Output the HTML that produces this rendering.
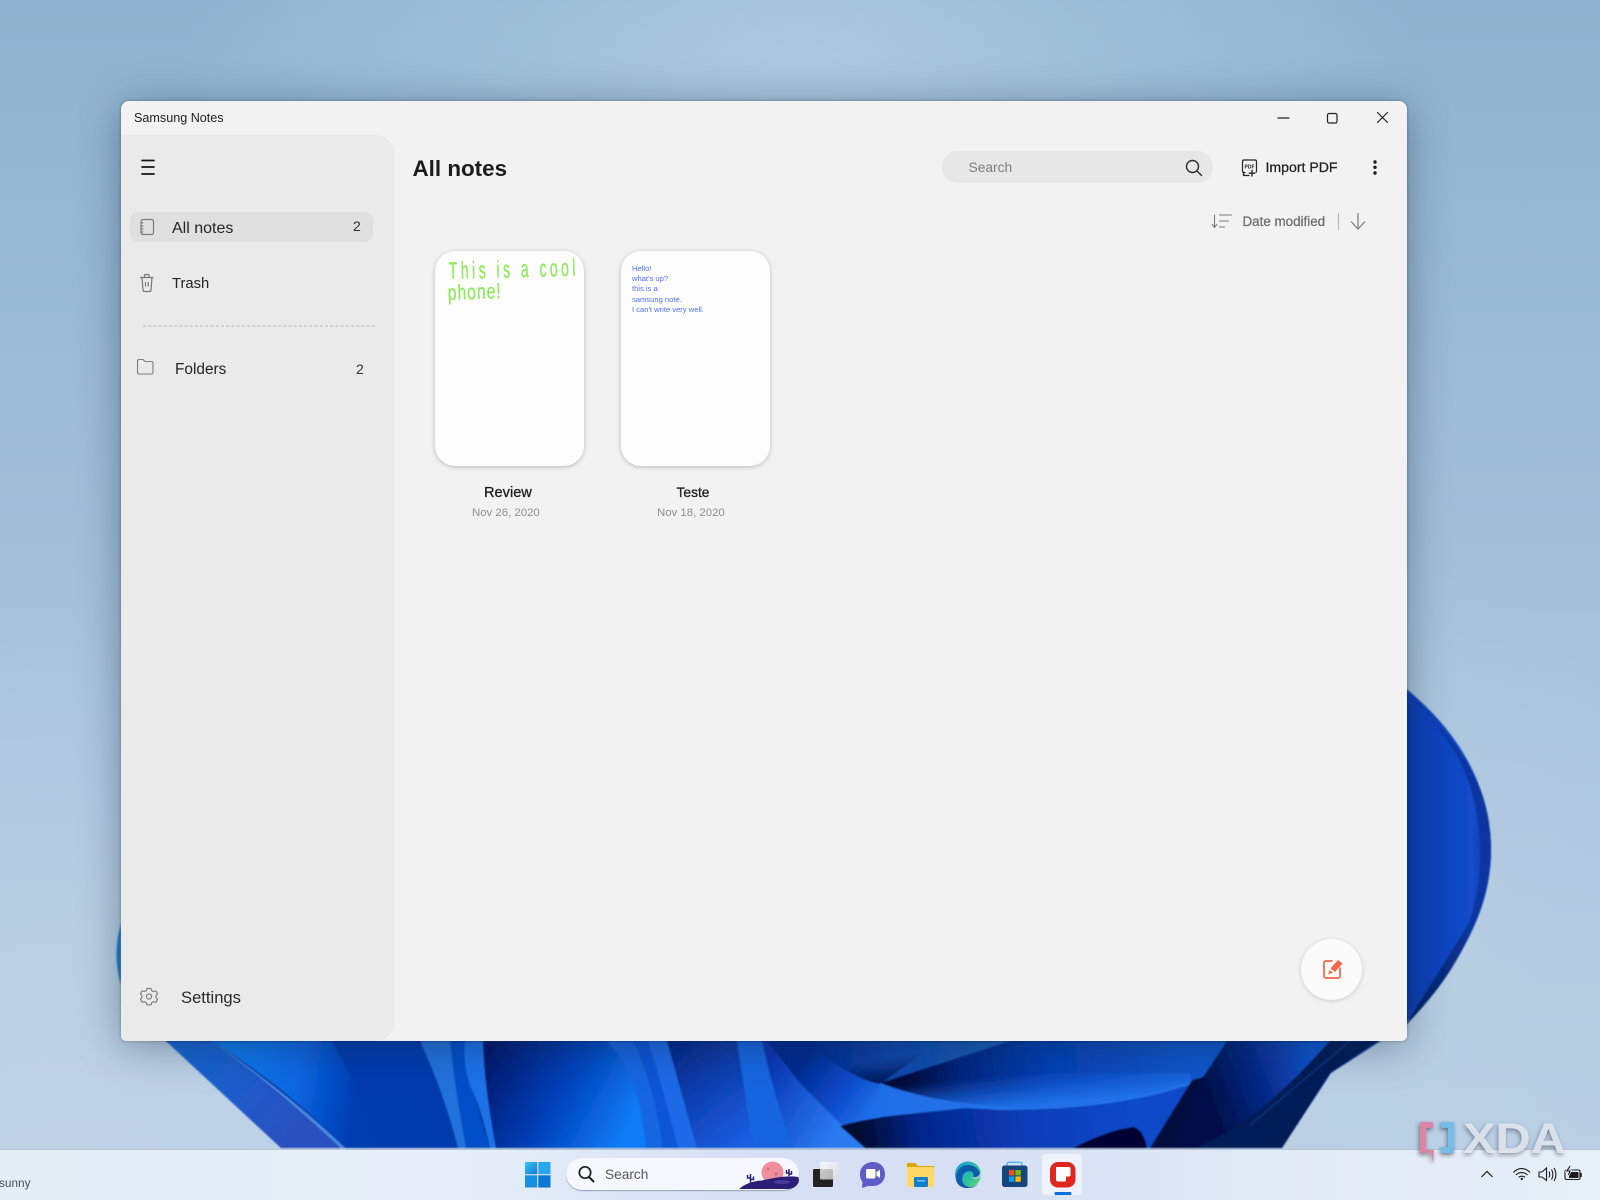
<!DOCTYPE html>
<html lang="en"><head><meta charset="utf-8"><title>Samsung Notes</title>
<style>
html,body{margin:0;padding:0;width:1600px;height:1200px;overflow:hidden}
body{position:relative;font-family:"Liberation Sans",sans-serif;background:#a9c4dc}
svg{position:absolute;overflow:visible}
.t{position:absolute;white-space:nowrap;line-height:20px;height:20px;color:#222;filter:blur(.25px)}
.bg{position:absolute;inset:0;background:
 radial-gradient(ellipse 620px 260px at 800px 60px,#abc9e0 0%,rgba(171,201,224,0) 100%),
 radial-gradient(ellipse 1000px 700px at 1000px 1200px,#bdd2e6 0%,rgba(189,210,230,0) 100%),
 radial-gradient(ellipse 800px 600px at 100px 1200px,#c0d3e6 0%,rgba(192,211,230,0) 100%),
 linear-gradient(180deg,#8fb3d0 0%,#9dbcd7 35%,#a9c4dd 60%,#b9cee3 100%)}
.win{position:absolute;left:121px;top:101px;width:1286px;height:940px;background:#f2f2f2;border-radius:8px 8px 5px 5px;box-shadow:0 6px 42px rgba(20,40,70,.42),0 0 3px rgba(0,0,0,.3)}
.side{position:absolute;left:121px;top:135px;width:273px;height:906px;background:#eaeaea;border-radius:0 18px 18px 5px}
.pill{position:absolute;left:130px;top:212px;width:243px;height:30px;background:#dfdfdf;border-radius:8px}
.search{position:absolute;left:942px;top:151px;width:271px;height:32px;background:#e7e7e7;border-radius:16px}
.card{position:absolute;top:251px;width:148.5px;height:215px;background:#fdfdfd;border-radius:20px;box-shadow:0 1px 5px rgba(0,0,0,.24)}
.fab{position:absolute;left:1301px;top:939px;width:61px;height:61px;border-radius:50%;background:#fbfbfb;box-shadow:0 1px 5px rgba(0,0,0,.16)}
.bar{position:absolute;left:0;top:1149px;width:1600px;height:51px;border-top:1px solid #b9c4d2;box-sizing:border-box;background:linear-gradient(90deg,#e3eef7 0%,#e6eff9 28%,#d6dff3 48%,#d6dff3 60%,#dfe8f6 75%,#e6f0f8 100%)}
.pillsearch{position:absolute;left:566px;top:1158px;width:233px;height:32px;border-radius:16px;background:#f5f8fe;box-shadow:0 1px 1px rgba(80,90,120,.5)}
.active{position:absolute;left:1042px;top:1154px;width:40px;height:41px;border-radius:4px;background:#eef2fb}
.ln{position:absolute;left:632px;font-size:7.6px;line-height:10px;color:#4f70ff;white-space:nowrap}
</style></head><body>
<div class="bg"></div>

<svg width="1600" height="1200" viewBox="0 0 1600 1200" style="left:0;top:0">
<defs>
<linearGradient id="gE" x1="490" y1="1050" x2="630" y2="1125" gradientUnits="userSpaceOnUse"><stop offset="0" stop-color="#00186c"/><stop offset=".5" stop-color="#0340b8"/><stop offset="1" stop-color="#0a7cf6"/></linearGradient>
<linearGradient id="gB" x1="240" y1="1060" x2="360" y2="1080" gradientUnits="userSpaceOnUse"><stop offset="0" stop-color="#0b78ec"/><stop offset=".5" stop-color="#0866e2"/><stop offset="1" stop-color="#023cb0"/></linearGradient>
<linearGradient id="gA" x1="180" y1="1050" x2="290" y2="1140" gradientUnits="userSpaceOnUse"><stop offset="0" stop-color="#1266d4"/><stop offset="1" stop-color="#2a50bf"/></linearGradient>
<linearGradient id="gF" x1="670" y1="1045" x2="750" y2="1145" gradientUnits="userSpaceOnUse"><stop offset="0" stop-color="#03278a"/><stop offset="1" stop-color="#1b60e4"/></linearGradient>
<linearGradient id="gH" x1="770" y1="1060" x2="850" y2="1110" gradientUnits="userSpaceOnUse"><stop offset="0" stop-color="#0736b4"/><stop offset="1" stop-color="#2a7af0"/></linearGradient>
<linearGradient id="gI" x1="810" y1="1050" x2="880" y2="1100" gradientUnits="userSpaceOnUse"><stop offset="0" stop-color="#012a90"/><stop offset=".6" stop-color="#0b4ccc"/><stop offset="1" stop-color="#1f6ee8"/></linearGradient>
<linearGradient id="gJ" x1="807" y1="1041" x2="1010" y2="1041" gradientUnits="userSpaceOnUse"><stop offset="0" stop-color="#02298e"/><stop offset=".45" stop-color="#0b48ac"/><stop offset="1" stop-color="#1c62ba"/></linearGradient>
<linearGradient id="gJd" x1="885" y1="1058" x2="890" y2="1086" gradientUnits="userSpaceOnUse"><stop offset="0" stop-color="#000a40" stop-opacity="0"/><stop offset="1" stop-color="#000a40" stop-opacity=".9"/></linearGradient>
<linearGradient id="gK" x1="905" y1="1075" x2="1190" y2="1055" gradientUnits="userSpaceOnUse"><stop offset="0" stop-color="#000a3a"/><stop offset=".2" stop-color="#02267f"/><stop offset=".5" stop-color="#0440b4"/><stop offset="1" stop-color="#0f56ca"/></linearGradient>
<linearGradient id="gK2" x1="1015" y1="1074" x2="1018" y2="1107" gradientUnits="userSpaceOnUse"><stop offset="0" stop-color="#1b6ce6" stop-opacity="0"/><stop offset="1" stop-color="#2274ec" stop-opacity=".95"/></linearGradient>
<linearGradient id="gL" x1="860" y1="1140" x2="1130" y2="1095" gradientUnits="userSpaceOnUse"><stop offset="0" stop-color="#000a30"/><stop offset=".22" stop-color="#02258a"/><stop offset=".6" stop-color="#0a3cb8"/><stop offset="1" stop-color="#1048c8"/></linearGradient>
<linearGradient id="gM" x1="880" y1="1095" x2="1010" y2="1105" gradientUnits="userSpaceOnUse"><stop offset="0" stop-color="#1f6ee8"/><stop offset="1" stop-color="#2272ea"/></linearGradient>
<linearGradient id="gN" x1="1205" y1="1090" x2="1310" y2="1050" gradientUnits="userSpaceOnUse"><stop offset="0" stop-color="#000f48"/><stop offset=".5" stop-color="#052a8a"/><stop offset="1" stop-color="#1154d0"/></linearGradient>
<linearGradient id="gR" x1="1407" y1="850" x2="1490" y2="850" gradientUnits="userSpaceOnUse"><stop offset="0" stop-color="#0a3bb0"/><stop offset=".8" stop-color="#124ccb"/><stop offset="1" stop-color="#0a3aa8"/></linearGradient>
<linearGradient id="gS" x1="1407" y1="1020" x2="1470" y2="920" gradientUnits="userSpaceOnUse"><stop offset="0" stop-color="#02215f"/><stop offset="1" stop-color="#0a36a0"/></linearGradient>
<filter id="soft"><feGaussianBlur stdDeviation=".7"/></filter>
</defs>
<g filter="url(#soft)">
<path d="M121 923C115 945 115 965 121 985Z" fill="#1a7fd0"/>
<path d="M121 1000L166 1041L281 1148H1282L1331 1073L1379 1042L1410 1018C1455 960 1491 910 1491 850C1491 790 1460 730 1405 690L1200 800L300 900Z" fill="#03369f"/>
<path d="M1400 684C1460 730 1491 790 1491 850C1491 900 1470 945 1437 985L1400 1030Z" fill="url(#gR)"/>
<path d="M1400 1030C1440 985 1482 930 1480 850C1480 790 1455 735 1407 696C1465 745 1491 790 1491 850C1491 905 1460 970 1405 1026Z" fill="#0836a2"/>
<path d="M1405 1026L1480 905C1465 955 1440 990 1405 1026Z" fill="url(#gS)"/>

<path d="M166 1041H214L345 1148H281Z" fill="url(#gA)"/>
<path d="M212 1041H332Q360 1090 381 1148H345Q290 1090 212 1041Z" fill="url(#gB)"/>
<path d="M212 1041Q290 1095 345 1148H341Q285 1095 212 1041Z" fill="#4a8ee8"/>
<path d="M332 1041H425L465 1148H381Q360 1090 332 1041Z" fill="#033ab0"/>
<path d="M420 1041H450Q455 1090 466 1148H458Q445 1095 420 1041Z" fill="#2072dc"/>
<path d="M450 1041H465Q465 1070 490 1148H466Q455 1090 450 1041Z" fill="#0650c8"/>
<path d="M465 1041H483Q484 1085 496 1148H490Q482 1110 470 1085Q463 1065 465 1041Z" fill="#1a72e8"/>
<path d="M483 1041H607Q640 1070 646 1148H496Q484 1085 483 1041Z" fill="url(#gE)"/>
<path d="M607 1041H633Q655 1085 663 1148H646Q640 1075 607 1041Z" fill="#1566e2"/>
<path d="M633 1041H648Q665 1095 678 1148H663Q655 1085 633 1041Z" fill="#0e55d8"/>
<path d="M648 1041H667L697 1148H678Q665 1095 648 1041Z" fill="#1c6ae8"/>
<path d="M667 1041H737L753 1148H697Z" fill="url(#gF)"/>
<path d="M737 1041H762Q775 1100 793 1148H753Z" fill="#1565e0"/>
<path d="M762 1041H767L800 1083L865 1148H793Q775 1100 762 1041Z" fill="url(#gH)"/>
<path d="M767 1041H810C835 1068 860 1078 882 1083V1117L840 1126L865 1148L800 1083Z" fill="url(#gI)"/>
<path d="M807 1041H1012L880 1084C855 1078 830 1064 807 1041Z" fill="url(#gJ)"/>
<path d="M850 1041H940L880 1084C868 1082 860 1078 850 1072Z" fill="url(#gJd)"/>
<path d="M880 1083L1010 1041H1227L1203 1077L1192 1080C1130 1102 1060 1108 1000 1106C950 1103 915 1096 880 1083Z" fill="url(#gK)"/>
<path d="M880 1083C915 1096 950 1103 1000 1106C1060 1108 1130 1102 1192 1080L1190 1073H915Z" fill="url(#gK2)"/>
<path d="M880 1083C915 1096 950 1103 1000 1106C1060 1108 1130 1102 1192 1080L1190 1085C1125 1106 1060 1110 1000 1110L965 1108L880 1117Z" fill="url(#gM)"/>
<path d="M840 1126C860 1120 880 1117 920 1113C960 1108 1000 1110 1000 1110C1060 1110 1125 1106 1190 1085L1150 1148H865Z" fill="url(#gL)"/>
<path d="M1073 1148C1095 1137 1115 1129 1134 1127C1142 1130 1146 1140 1147 1148Z" fill="#000530"/>
<path d="M1192 1080L1150 1148H1174L1200 1078Z" fill="#000a3c"/>
<path d="M1200 1078L1173 1148H1197C1250 1125 1290 1085 1330 1041H1227L1203 1077Z" fill="url(#gN)"/>
<path d="M1330 1041H1378L1330 1073L1282 1148H1197C1250 1125 1290 1085 1330 1041Z" fill="#021c56"/>
<path d="M1350 1041L1250 1125" stroke="#0a3c8a" stroke-width="1" fill="none"/>
</g>
</svg>

<div class="win"></div>
<div class="side"></div>
<div class="t" style="left:134px;top:108px;font-size:12.6px;color:#1f1f1f">Samsung Notes</div>

<svg style="left:0;top:0" width="1600" height="1200" viewBox="0 0 1600 1200" fill="none" stroke-linecap="round" stroke-linejoin="round">
<g stroke="#222" stroke-width="1.2"><path d="M1278 118H1289"/><rect x="1327.5" y="113.5" width="9.5" height="9.5" rx="1.6"/><path d="M1377.5 112.5L1387.5 122.5M1387.5 112.5L1377.5 122.5"/></g>
<path d="M142 160.5H154M142 167H154M142 174H154" stroke="#141414" stroke-width="1.7"/>
<g stroke="#777" stroke-width="1.2"><path d="M140.5 277.5H153M142 277.5L143 290C143 291 144 291.5 145 291.5H149C150 291.5 151 291 151 290L152 277.5M144.5 277V275.5C144.5 274.5 145 274.5 145.5 274.5H148C149 274.5 149 275 149 275.5V277M145.5 282.5V286M148.2 282.5V286"/></g>
<path d="M143 326H375" stroke="#b8b8b8" stroke-width="1" stroke-dasharray="3 2.2" stroke-linecap="butt"/>
<path d="M137.5 361C137.5 360 138.2 359.5 139 359.5H143L145 361.5H151.5C152.4 361.5 153 362 153 363V372.5C153 373.5 152.4 374 151.5 374H139C138.2 374 137.5 373.5 137.5 372.5Z" stroke="#7e7e7e" stroke-width="1.1"/>
<g stroke="#7a7a7a" stroke-width="1.1"><circle cx="149" cy="996.5" r="2.6"/><path d="M147 988.4H151L151.7 990.6L153.7 991.6L155.9 990.9L157.6 993.9L156 995.5V997.7L157.6 999.3L155.9 1002.3L153.7 1001.6L151.7 1002.6L151 1004.8H147L146.3 1002.6L144.3 1001.6L142.1 1002.3L140.4 999.3L142 997.7V995.5L140.4 993.9L142.1 990.9L144.3 991.6L146.3 990.6Z"/></g>
</svg>

<div class="pill"></div>
<svg style="left:0;top:0" width="1600" height="1200" viewBox="0 0 1600 1200" fill="none" stroke-linecap="round"><g stroke="#7a7a7a" stroke-width="1.2"><rect x="141" y="219.5" width="12.5" height="15" rx="2"/><path d="M141 223H142.8M141 226H142.8M141 229H142.8M141 232H142.8"/></g></svg>

<div class="t" style="left:172px;top:218.5px;font-size:16px;color:#252525">All notes</div>
<div class="t" style="left:353px;top:216px;font-size:14px;color:#333">2</div>
<div class="t" style="left:172px;top:274px;font-size:14.8px;color:#252525">Trash</div>
<div class="t" style="left:175px;top:360px;font-size:15.4px;color:#252525">Folders</div>
<div class="t" style="left:356px;top:359px;font-size:14px;color:#333">2</div>
<div class="t" style="left:181px;top:988px;font-size:16.6px;color:#2a2a2a">Settings</div>

<div class="t" style="left:412.5px;top:158.5px;font-size:22.4px;font-weight:700;color:#1c1c1c">All notes</div>

<div class="search"></div>
<div class="t" style="left:968.5px;top:158px;font-size:13.8px;color:#7e7e7e">Search</div>
<svg style="left:0;top:0" width="1600" height="1200" viewBox="0 0 1600 1200" fill="none" stroke-linecap="round" stroke-linejoin="round">
<g stroke="#2b2b2b" stroke-width="1.4"><circle cx="1192.5" cy="166.5" r="6"/><path d="M1197 171L1201.5 175.5"/></g>
<g stroke="#242424" stroke-width="1.2"><path d="M1245 172.5H1243.8C1243 172.5 1242.5 172 1242.5 171V161.5C1242.5 160.5 1243 160 1244 160H1255C1256 160 1256.5 160.5 1256.5 161.5V171C1256.5 171.6 1256.3 172 1256 172.2M1243.5 175.5V172.5C1243.5 175 1244 175.5 1245 175.5H1249"/><path d="M1252 170.5V176M1249.3 173.2H1254.7" stroke-width="1.4"/></g>
<text x="1244.5" y="168.3" font-family="Liberation Sans" font-size="5.2" font-weight="700" fill="#242424" stroke="none" textLength="10" lengthAdjust="spacingAndGlyphs">PDF</text>
<g fill="#1d1d1d"><circle cx="1375" cy="162" r="1.7"/><circle cx="1375" cy="167.3" r="1.7"/><circle cx="1375" cy="173" r="1.7"/></g>
<g stroke="#7c7c7c" stroke-width="1.1"><path d="M1214.5 215V227M1212.2 224.6L1214.5 227.4L1216.8 224.6M1219.5 215H1231.5M1219.5 221H1228.5M1219.5 227H1224.5"/><path d="M1338.5 213.5V229.5" stroke="#b5b5b5"/><path d="M1358 213.5V228.5M1351.5 222L1358 229L1364.5 222" stroke-width="1.2"/></g>
</svg>
<div class="t" style="left:1265.5px;top:157px;font-size:14.1px;color:#1f1f1f;-webkit-text-stroke:.25px #1f1f1f">Import PDF</div>
<div class="t" style="left:1242.5px;top:212px;font-size:13.4px;color:#6d6d6d;-webkit-text-stroke:.25px #6d6d6d">Date modified</div>

<div class="card" style="left:435px"></div>
<div class="card" style="left:621px"></div>
<svg style="left:0;top:0" width="1600" height="1200" viewBox="0 0 1600 1200">
<g font-family="Liberation Sans, sans-serif" fill="#8fe95c" stroke="#8fe95c" stroke-width=".25">
<text font-size="16" textLength="144" lengthAdjust="spacing" transform="translate(449 279) rotate(-1.5) scale(.88 1.5)">This is a cool</text>
<text font-size="16" textLength="54" lengthAdjust="spacing" transform="translate(448 300) rotate(-2) scale(.98 1.35)">phone!</text>
</g>
</svg>
<div class="ln" style="top:264px">Hello!</div>
<div class="ln" style="top:274px">what's up?</div>
<div class="ln" style="top:284px">this is a</div>
<div class="ln" style="top:295px">samsung note.</div>
<div class="ln" style="top:305px">I can't write very well.</div>

<div class="t" style="left:484px;top:482.5px;font-size:14.6px;color:#1f1f1f;-webkit-text-stroke:.3px #1f1f1f">Review</div>
<div class="t" style="left:472px;top:503px;font-size:11.4px;color:#8f8f8f">Nov 26, 2020</div>
<div class="t" style="left:676.5px;top:482.5px;font-size:13.8px;color:#1f1f1f;-webkit-text-stroke:.3px #1f1f1f">Teste</div>
<div class="t" style="left:657px;top:503px;font-size:11.4px;color:#8f8f8f">Nov 18, 2020</div>

<div class="fab"></div>
<svg style="left:0;top:0" width="1600" height="1200" viewBox="0 0 1600 1200" fill="none">
<path d="M1332 961H1326C1324.5 961 1324 961.8 1324 963V976C1324 977.4 1324.8 978 1326 978H1338C1339.4 978 1340 977.2 1340 976V968" stroke="#f2674a" stroke-width="1.7" stroke-linecap="round"/>
<path d="M1338 960L1342.5 963.5L1335 972L1330.5 968.5Z" fill="#f2674a"/><path d="M1329.5 970L1333 972.7L1328.3 974.3Z" fill="#f2674a"/>
</svg>

<div class="bar"></div>
<div class="t" style="left:-1px;top:1173px;font-size:11.8px;color:#4a4f55">sunny</div>
<div class="pillsearch"></div>
<div class="active"></div>
<div class="t" style="left:605px;top:1165px;font-size:13.7px;color:#55585e">Search</div>

<svg style="left:0;top:0" width="1600" height="1200" viewBox="0 0 1600 1200" fill="none">
<defs>
<linearGradient id="st" x1="0" y1="0" x2="1" y2="1"><stop offset="0" stop-color="#3cc4f7"/><stop offset="1" stop-color="#0a78d8"/></linearGradient>
<linearGradient id="ed" x1="0" y1="0" x2="1" y2="1"><stop offset="0" stop-color="#1a9ad8"/><stop offset=".6" stop-color="#2fc0a0"/><stop offset="1" stop-color="#5fdc6a"/></linearGradient>
<linearGradient id="ts" x1="0" y1="0" x2="1" y2="1"><stop offset="0" stop-color="#fff"/><stop offset="1" stop-color="#d8d8d8"/></linearGradient>
</defs>
<rect x="525" y="1162" width="12.2" height="12.2" fill="url(#st)"/><rect x="538.3" y="1162" width="12.2" height="12.2" fill="#2aa6ea"/><rect x="525" y="1175.3" width="12.2" height="12.2" fill="#1590e4"/><rect x="538.3" y="1175.3" width="12.2" height="12.2" fill="#0a78d6"/>
<circle cx="585" cy="1172.5" r="5.7" stroke="#1e1e1e" stroke-width="1.7"/><path d="M589 1177L593.5 1181.5" stroke="#1e1e1e" stroke-width="2" stroke-linecap="round"/>
<circle cx="772.5" cy="1172.5" r="11" fill="#ef8f9e"/><circle cx="768" cy="1169" r="1.5" fill="#d8707f"/><circle cx="776" cy="1174" r="1.7" fill="#d8707f"/>
<path d="M739 1189C745 1184 752 1181 762 1180.5C772 1178 788 1175 798 1177C801 1182 796 1189 788 1189Z" fill="#2c1e76"/>
<ellipse cx="782" cy="1182" rx="8" ry="2" fill="#4a3a9c"/>
<path d="M750.5 1184V1174M750.5 1178H747.5V1175M750.5 1179.5H753.5V1176.5M789 1176V1169M789 1173H786.5V1170M789 1174H791.5V1171" stroke="#2c1e76" stroke-width="1.5"/>
<rect x="813" y="1169" width="20" height="18" rx="1.5" fill="#222"/><rect x="820" y="1162" width="19" height="17.5" rx="1.5" fill="url(#ts)" opacity=".78"/>
<path d="M873 1162C880 1162 885 1167 885 1174C885 1181 880 1186 873 1186H868L862 1188L862.5 1182C860.5 1179.5 860 1177 860 1174C860 1167 866 1162 873 1162Z" fill="#5f5bc7"/><rect x="866" y="1169" width="9.5" height="9.5" rx="1.6" fill="#fff"/><path d="M876.5 1172L880 1169.8V1178L876.5 1175.7Z" fill="#fff"/>
<path d="M907 1164C907 1163 908 1163 908.5 1163H915L918 1166H934V1170H907Z" fill="#e2a400"/>
<path d="M907 1167H932.5C933.5 1167 934 1167.8 934 1168.6V1185C934 1186.2 933.3 1187 932 1187H908.5C907.6 1187 907 1186.2 907 1185Z" fill="#ffd865"/>
<rect x="914" y="1177" width="14" height="10" rx="1.5" fill="#0f7ed0"/><rect x="917" y="1180" width="8" height="1.6" fill="#75c2f0"/>
<circle cx="968" cy="1174.5" r="13" fill="url(#ed)"/>
<path d="M956 1180C955 1170 962 1165 968 1165C975 1165 980 1170 980 1175C980 1179 974 1180 973 1177C975 1172 970 1170 966 1172C961 1175 961 1183 966 1186C970 1188 976 1187 979 1183C976 1188 970 1188 965 1188C960 1187 957 1184 956 1180Z" fill="#0d5cab"/>
<path d="M972 1177C974 1180 979 1180 981 1176V1172C978 1178 975 1177 972 1177Z" fill="#fff" opacity=".55"/>
<path d="M1007 1166V1164C1007 1163 1008 1162.3 1009 1162.3H1020C1021 1162.3 1022 1163 1022 1164V1166" stroke="#4ab4e8" stroke-width="1.4"/>
<rect x="1002" y="1165.5" width="25.5" height="21.5" rx="2.5" fill="#17467f"/>
<rect x="1009" y="1170" width="5.4" height="5.4" fill="#f25022"/><rect x="1015.4" y="1170" width="5.4" height="5.4" fill="#7fba00"/><rect x="1009" y="1176.4" width="5.4" height="5.4" fill="#00a4ef"/><rect x="1015.4" y="1176.4" width="5.4" height="5.4" fill="#ffb900"/>
<rect x="1050" y="1162" width="25.5" height="25.5" rx="8" fill="#e0271d"/>
<path d="M1056 1167H1069C1070 1167 1070.5 1167.5 1070.5 1168.5V1175C1070.5 1176 1070 1176.5 1069 1176.5H1066V1180C1066 1181 1065.5 1181.5 1064.5 1181.5H1058C1057 1181.5 1056 1181 1056 1180Z" fill="#fff"/>
<rect x="1054.5" y="1192" width="17" height="3" rx="1.4" fill="#0a6fd8"/>
<path d="M1481.5 1177L1487 1171.5L1492.5 1177" stroke="#1c1c1c" stroke-width="1.2"/>
<g stroke="#1c1c1c" stroke-width="1.1"><path d="M1513.5 1172.5C1518 1167.3 1525.5 1167.3 1530 1172.5M1516 1175C1519 1171.7 1524.5 1171.7 1527.5 1175M1518.6 1177.3C1520.2 1175.8 1523.3 1175.8 1525 1177.3"/></g>
<circle cx="1521.8" cy="1179" r="1.2" fill="#1c1c1c"/>
<g stroke="#1c1c1c" stroke-width="1.1"><path d="M1539 1172H1542L1546.5 1168V1180.5L1542 1177H1539Z"/><path d="M1549 1171.5C1550 1173.5 1550 1175.5 1549 1177.5M1551.5 1169.5C1553.3 1172.5 1553.3 1176.5 1551.5 1179.5M1554 1168C1556.5 1172 1556.5 1177 1554 1181"/></g>
<rect x="1565" y="1170" width="15" height="9.5" rx="1.5" stroke="#1c1c1c" stroke-width="1.1"/><rect x="1569" y="1172" width="9.5" height="6" fill="#1c1c1c"/><path d="M1581 1173V1177" stroke="#1c1c1c" stroke-width="1.6"/><path d="M1570 1166L1567 1171H1570L1568.5 1175" stroke="#e4ecf6" stroke-width="2.6"/><path d="M1570 1166L1567 1171H1570L1568.5 1175" stroke="#1c1c1c" stroke-width="1.1"/>
<defs><filter id="sh" x="-20%" y="-20%" width="140%" height="140%"><feDropShadow dx="-1" dy="2" stdDeviation="2" flood-color="#223" flood-opacity=".55"/></filter></defs>
<g filter="url(#sh)">
<path d="M1433 1122H1420V1153H1431L1433 1163L1434 1150H1426V1128H1433Z" fill="#dd86a4"/>
<path d="M1441 1122H1454V1153H1441V1147H1448V1128H1441Z" fill="#73bde6"/>
<text x="1463" y="1153" font-family="Liberation Sans, sans-serif" font-size="43" font-weight="700" fill="#e6ebf2" fill-opacity=".8" textLength="103" lengthAdjust="spacingAndGlyphs">XDA</text>
</g>
</svg>
</body></html>
